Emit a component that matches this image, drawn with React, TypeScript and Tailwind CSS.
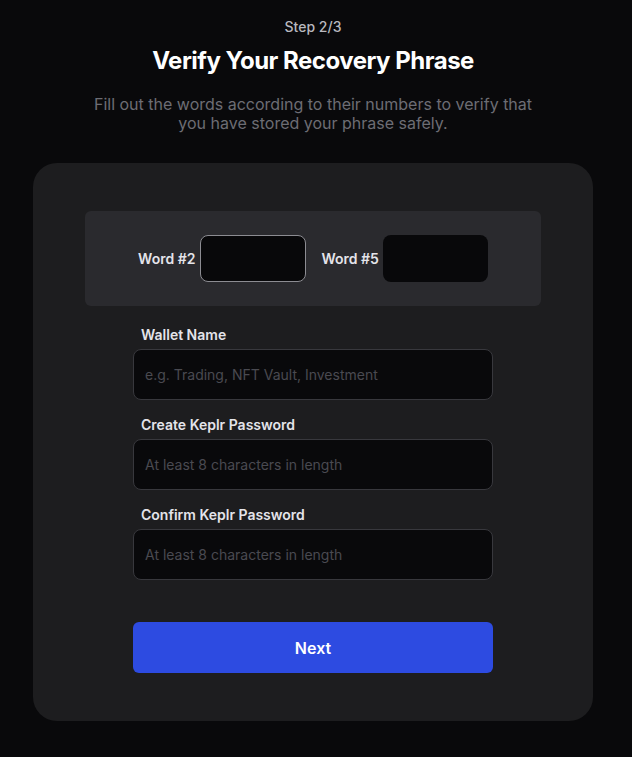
import React from "react";

export default function App() {
  const font = { fontFamily: "Inter, 'Liberation Sans', sans-serif" };
  return (
    <div className="min-h-[757px] w-full bg-[#09090b] flex flex-col items-center pr-[6px] text-white" style={font}>
      <div className="mt-[18px] text-[14px] leading-[18px] font-medium text-[#b8b8bf]">Step 2/3</div>
      <h1 className="mt-[10px] text-[24px] leading-[30px] font-bold tracking-[-0.5px] text-white">
        Verify Your Recovery Phrase
      </h1>
      <p className="mt-[19px] w-[460px] text-center text-[16px] leading-[19px] text-[#6d6d74]">
        Fill out the words according to their numbers to verify that you have stored your phrase safely.
      </p>
      <div className="mt-[30px] w-[560px] rounded-[24px] bg-[#1d1d1f] pt-[48px] pb-[48px] flex flex-col items-center">
        <div className="w-[456px] h-[95px] rounded-[6px] bg-[#2a2a2e] flex items-center justify-center gap-[15px]">
          <div className="flex items-center gap-[5px]">
            <span className="text-[14px] font-semibold text-[#e4e4ea]">Word #2</span>
            <div className="w-[106px] h-[47px] rounded-[8px] bg-[#08080a] border border-[#8c8c92]" />
          </div>
          <div className="flex items-center gap-[4px]">
            <span className="text-[14px] font-semibold text-[#e4e4ea]">Word #5</span>
            <div className="w-[105px] h-[47px] rounded-[8px] bg-[#08080a]" />
          </div>
        </div>
        <div className="w-[360px] mt-[20px] flex flex-col">
          <Field label="Wallet Name" placeholder="e.g. Trading, NFT Vault, Investment" />
          <Field label="Create Keplr Password" placeholder="At least 8 characters in length" className="mt-[16px]" />
          <Field label="Confirm Keplr Password" placeholder="At least 8 characters in length" className="mt-[16px]" />
          <button className="mt-[42px] h-[51px] w-full rounded-[6px] bg-[#2d4be1] text-[16px] font-semibold text-white">
            Next
          </button>
        </div>
      </div>
    </div>
  );
}

function Field({ label, placeholder, className = "" }: { label: string; placeholder: string; className?: string }) {
  return (
    <div className={"flex flex-col " + className}>
      <label className="pl-[8px] text-[14px] leading-[18px] font-semibold text-[#e4e4ea]">{label}</label>
      <div className="mt-[5px] h-[51px] rounded-[8px] bg-[#09090b] border border-[#38383d] flex items-center px-[11px]">
        <span className="text-[14px] text-[#4a4a51]">{placeholder}</span>
      </div>
    </div>
  );
}
